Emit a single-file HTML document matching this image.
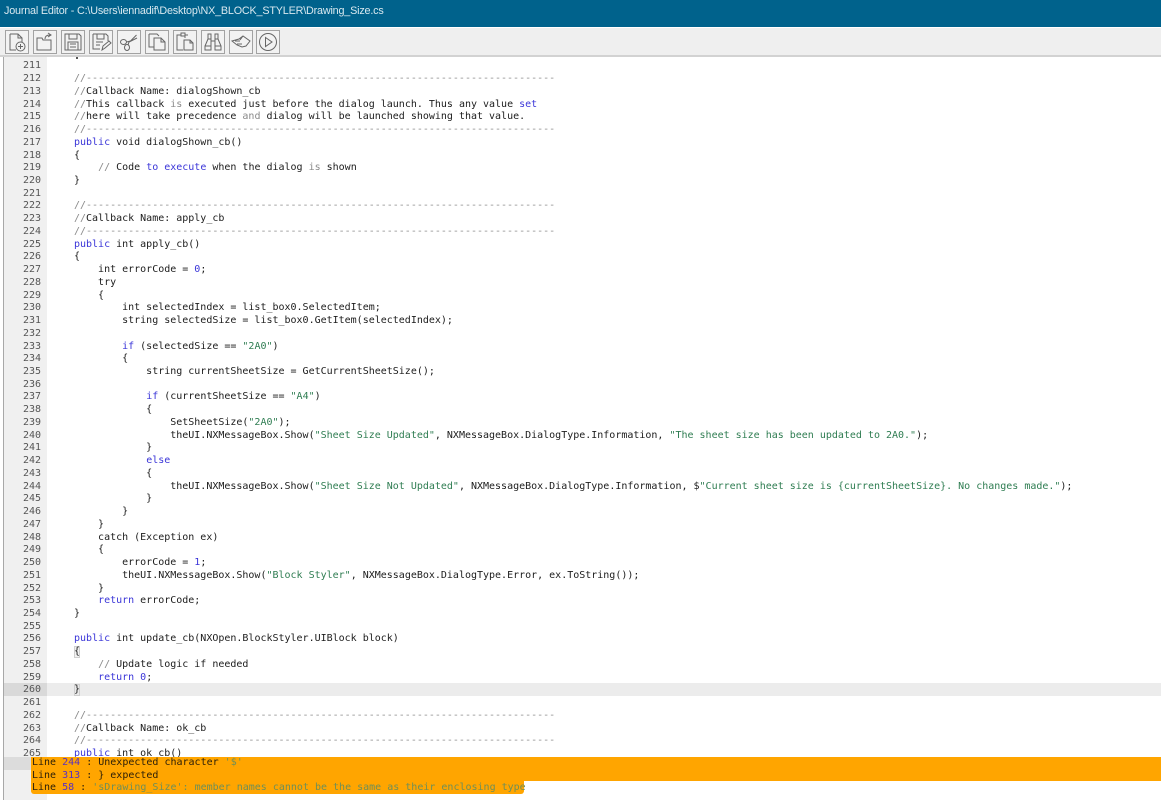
<!DOCTYPE html>
<html><head><meta charset="utf-8"><style>
html,body{margin:0;padding:0;background:#fff;width:1161px;height:800px;overflow:hidden}
body{position:relative;font-family:"DejaVu Sans Mono",monospace}
.a{position:absolute}
#title{left:0;top:0;width:1161px;height:27px;background:#00628c;color:#d8e8ef;font:10.8px/22px "Liberation Sans",sans-serif;letter-spacing:-.19px;padding-left:4px;box-sizing:border-box}
#tb{left:0;top:28px;width:1161px;height:27px;background:#efefef}
#tl{left:0;top:55px;width:1161px;height:2px;background:#d2d2d2}
.b{position:absolute;top:30px;width:24px;height:24px}
.b rect.o{fill:#f2f2f2;stroke:#a2a2a2}
.b path,.b circle,.b rect.i{fill:none;stroke:#666;stroke-width:1}
#gut{left:4px;top:57px;width:43px;height:743px;background:#f0f0f0}
#bar{left:3px;top:57px;width:1px;height:743px;background:#a8a8a8}
#curg{left:4px;top:683px;width:43px;height:13px;background:#d9d9d9}
#cur{left:47px;top:683px;width:1114px;height:13px;background:#ececec}
pre{margin:0;font:10px/12.74px "DejaVu Sans Mono",monospace;color:#1c1c1c;filter:blur(.25px)}
#clipn{left:0;top:57px;width:47px;height:700px;overflow:hidden}
#clipc{left:50px;top:57px;width:1111px;height:700px;overflow:hidden}
#code{left:24px;top:3.4px;white-space:pre;letter-spacing:-.006px}
#nums{left:4px;top:3.4px;width:37px;text-align:right;color:#555}
i{font-style:normal}
.k{color:#3a35d8}.c{color:#8a8a8a}.s{color:#2f7d52}.g{color:#8f8f8f}
.br{position:absolute;left:74px;width:6px;height:12px;border:1px solid #cfcfcf;box-sizing:border-box;background:rgba(230,230,230,.5)}
#g2{left:4px;top:757px;width:27px;height:13px;background:#dcdcdc}
#e1{left:31px;top:757px;width:1130px;height:24px;background:#ffa500}
#e2{left:31px;top:781px;width:493px;height:13px;background:#ffa500;border-radius:0 0 3px 3px}
#err{left:32px;top:757px;line-height:12.6px;color:#2e2008}
#err .n{color:#5a30c0}#err .t{color:#6f8f58}
</style></head><body>
<div class="a" id="title">Journal Editor - C:\Users\iennadif\Desktop\NX_BLOCK_STYLER\Drawing_Size.cs</div>
<div class="a" id="tb"></div><div class="a" id="tl"></div>

<svg class="b" style="left:5px" viewBox="0 0 24 24"><rect class="o" x=".5" y=".5" width="23" height="23"/><path d="M5 4h8l4 4v4M13 4v4h4M5 4v16h6"/><circle cx="15.5" cy="16.5" r="4.5"/><path d="M13 16.5h5M15.500 14v5"/></svg>
<svg class="b" style="left:33px" viewBox="0 0 24 24"><rect class="o" x=".5" y=".5" width="23" height="23"/><path d="M4 10v10h14V10H10L9 8H4zM12 9c0-3 2-4 5-4M15 3l3 2-3 2"/></svg>
<svg class="b" style="left:61px" viewBox="0 0 24 24"><rect class="o" x=".5" y=".5" width="23" height="23"/><path d="M4 4h14l2 2v14H4zM8 4v5h8V4M7 20v-8h10v8M9 14h6M9 17h6"/></svg>
<svg class="b" style="left:89px" viewBox="0 0 24 24"><rect class="o" x=".5" y=".5" width="23" height="23"/><path d="M4 4h13l2 2v5M8 4v5h7V4M4 4v15h7M7 12h7M7 15h4M13 20l1-4 6-5 2 2-6 5z"/></svg>
<svg class="b" style="left:117px" viewBox="0 0 24 24"><rect class="o" x=".5" y=".5" width="23" height="23"/><ellipse cx="6.500" cy="12" rx="3" ry="2.500" fill="none" stroke="#666"/><ellipse cx="10" cy="17.500" rx="2.500" ry="3" fill="none" stroke="#666"/><path d="M9.500 12l4-1 6-6M11 15l1-3 8-4"/></svg>
<svg class="b" style="left:145px" viewBox="0 0 24 24"><rect class="o" x=".5" y=".5" width="23" height="23"/><path d="M4 4h8l2 2M4 4v13h5M9 8h7l4 4v8H9zM16 8v4h4"/></svg>
<svg class="b" style="left:173px" viewBox="0 0 24 24"><rect class="o" x=".5" y=".5" width="23" height="23"/><path d="M8 5H4v15h6M15 5h-3v3M8 3h4v3H8zM11 10h6l3 3v7h-9zM17 10v3h3"/></svg>
<svg class="b" style="left:201px" viewBox="0 0 24 24"><rect class="o" x=".5" y=".5" width="23" height="23"/><path d="M7 4h3v5H7zM14 4h3v5h-3zM7 9l-3 7v4h6V9M17 9l3 7v4h-6V9M10 11h4M4 16h6M14 16h6"/></svg>
<svg class="b" style="left:229px" viewBox="0 0 24 24"><rect class="o" x=".5" y=".5" width="23" height="23"/><path d="M3 11l7-2 4-3 7 5-4 5-4 1-5-2zM6 11h5M8 14h5M14 6l-3 4"/></svg>
<svg class="b" style="left:256px" viewBox="0 0 24 24"><rect class="o" x=".5" y=".5" width="23" height="23"/><circle cx="12" cy="12" r="8.5"/><path d="M9.500 7.500l6.500 4.500-6.500 4.500z"/></svg>

<div class="a" id="bar"></div><div class="a" id="gut"></div>
<div class="a" id="curg"></div><div class="a" id="cur"></div>
<div class="a" style="left:76px;top:57px;width:2px;height:2px;background:#555"></div>
<div class="br" style="top:646px"></div><div class="br" style="top:684px"></div>

<div class="a" id="clipn"><pre class="a" id="nums">211
212
213
214
215
216
217
218
219
220
221
222
223
224
225
226
227
228
229
230
231
232
233
234
235
236
237
238
239
240
241
242
243
244
245
246
247
248
249
250
251
252
253
254
255
256
257
258
259
260
261
262
263
264
265</pre></div>

<div class="a" id="clipc"><pre class="a" id="code">

<i class="c">//</i><i class="g">------------------------------------------------------------------------------</i>
<i class="c">//</i>Callback Name: dialogShown_cb
<i class="c">//</i>This callback <i class="c">is</i> executed just before the dialog launch. Thus any value <i class="k">set</i>
<i class="c">//</i>here will take precedence <i class="c">and</i> dialog will be launched showing that value.
<i class="c">//</i><i class="g">------------------------------------------------------------------------------</i>
<i class="k">public</i> void dialogShown_cb()
{
    <i class="c">//</i> Code <i class="k">to execute</i> when the dialog <i class="c">is</i> shown
}

<i class="c">//</i><i class="g">------------------------------------------------------------------------------</i>
<i class="c">//</i>Callback Name: apply_cb
<i class="c">//</i><i class="g">------------------------------------------------------------------------------</i>
<i class="k">public</i> int apply_cb()
{
    int errorCode = <i class="k">0</i>;
    try
    {
        int selectedIndex = list_box0.SelectedItem;
        string selectedSize = list_box0.GetItem(selectedIndex);

        <i class="k">if</i> (selectedSize == <i class="s">"2A0"</i>)
        {
            string currentSheetSize = GetCurrentSheetSize();

            <i class="k">if</i> (currentSheetSize == <i class="s">"A4"</i>)
            {
                SetSheetSize(<i class="s">"2A0"</i>);
                theUI.NXMessageBox.Show(<i class="s">"Sheet Size Updated"</i>, NXMessageBox.DialogType.Information, <i class="s">"The sheet size has been updated to 2A0."</i>);
            }
            <i class="k">else</i>
            {
                theUI.NXMessageBox.Show(<i class="s">"Sheet Size Not Updated"</i>, NXMessageBox.DialogType.Information, $<i class="s">"Current sheet size is {currentSheetSize}. No changes made."</i>);
            }
        }
    }
    catch (Exception ex)
    {
        errorCode = <i class="k">1</i>;
        theUI.NXMessageBox.Show(<i class="s">"Block Styler"</i>, NXMessageBox.DialogType.Error, ex.ToString());
    }
    <i class="k">return</i> errorCode;
}

<i class="k">public</i> int update_cb(NXOpen.BlockStyler.UIBlock block)
{
    <i class="c">//</i> Update logic if needed
    <i class="k">return 0</i>;
}

<i class="c">//</i><i class="g">------------------------------------------------------------------------------</i>
<i class="c">//</i>Callback Name: ok_cb
<i class="c">//</i><i class="g">------------------------------------------------------------------------------</i>
<i class="k">public</i> int ok_cb()</pre></div>

<div class="a" id="g2"></div>
<div class="a" id="e1"></div><div class="a" id="e2"></div>
<pre class="a" id="err">Line <i class="n">244</i> : Unexpected character <i class="t">'$'</i>
Line <i class="n">313</i> : } expected
Line <i class="n">58</i> : <i class="t">'sDrawing_Size': member names cannot be the same as their enclosing type</i></pre>
</body></html>
